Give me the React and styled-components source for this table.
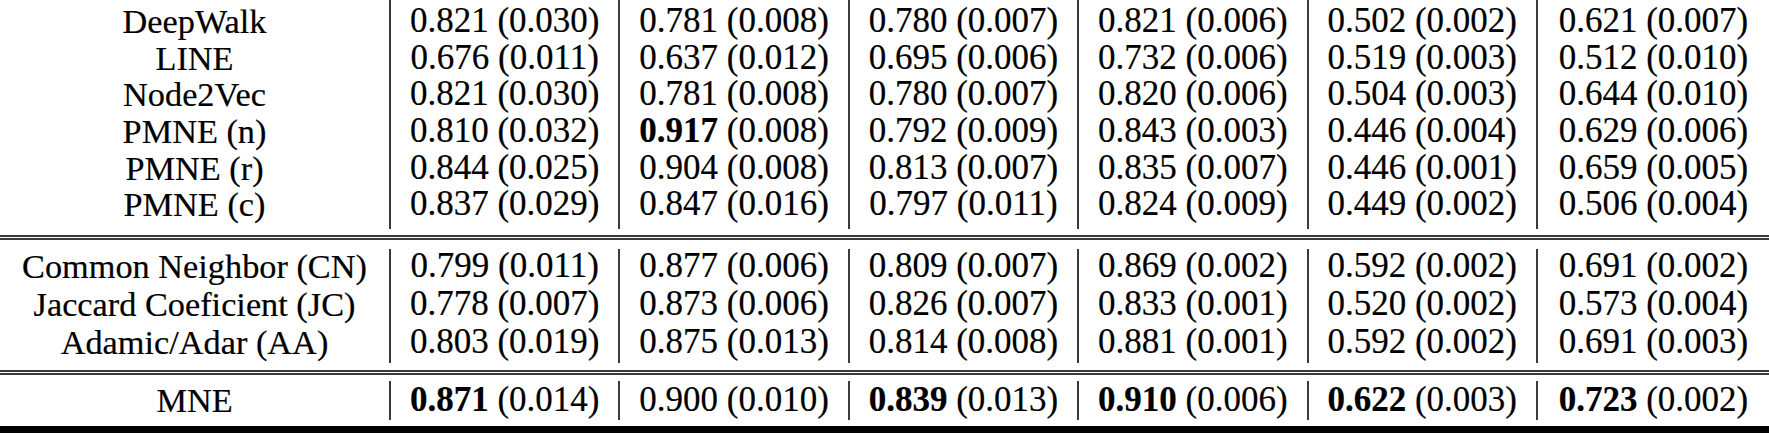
import React from "react";
import styled, { createGlobalStyle } from "styled-components";

const GlobalStyle = createGlobalStyle`
  html, body {
    margin: 0;
    padding: 0;
    background: #fff;
  }
  body {
    font-family: "Liberation Serif", "Times New Roman", serif;
    color: #000;
  }
`;

// each section lists the rows; a leading * marks the best mean in that column
const sections = [
  {
    lead: 9,
    shift: 0,
    rowHeight: 36.7,
    rows: [
      ["DeepWalk", "0.821 (0.030)", "0.781 (0.008)", "0.780 (0.007)", "0.821 (0.006)", "0.502 (0.002)", "0.621 (0.007)"],
      ["LINE", "0.676 (0.011)", "0.637 (0.012)", "0.695 (0.006)", "0.732 (0.006)", "0.519 (0.003)", "0.512 (0.010)"],
      ["Node2Vec", "0.821 (0.030)", "0.781 (0.008)", "0.780 (0.007)", "0.820 (0.006)", "0.504 (0.003)", "0.644 (0.010)"],
      ["PMNE (n)", "0.810 (0.032)", "*0.917 (0.008)", "0.792 (0.009)", "0.843 (0.003)", "0.446 (0.004)", "0.629 (0.006)"],
      ["PMNE (r)", "0.844 (0.025)", "0.904 (0.008)", "0.813 (0.007)", "0.835 (0.007)", "0.446 (0.001)", "0.659 (0.005)"],
      ["PMNE (c)", "0.837 (0.029)", "0.847 (0.016)", "0.797 (0.011)", "0.824 (0.009)", "0.449 (0.002)", "0.506 (0.004)"],
    ],
  },
  {
    lead: 0,
    shift: 5,
    rowHeight: 38,
    rows: [
      ["Common Neighbor (CN)", "0.799 (0.011)", "0.877 (0.006)", "0.809 (0.007)", "0.869 (0.002)", "0.592 (0.002)", "0.691 (0.002)"],
      ["Jaccard Coeficient (JC)", "0.778 (0.007)", "0.873 (0.006)", "0.826 (0.007)", "0.833 (0.001)", "0.520 (0.002)", "0.573 (0.004)"],
      ["Adamic/Adar (AA)", "0.803 (0.019)", "0.875 (0.013)", "0.814 (0.008)", "0.881 (0.001)", "0.592 (0.002)", "0.691 (0.003)"],
    ],
  },
  {
    lead: 0,
    shift: 6.5,
    rowHeight: 39,
    rows: [
      ["MNE", "*0.871 (0.014)", "0.900 (0.010)", "*0.839 (0.013)", "*0.910 (0.006)", "*0.622 (0.003)", "*0.723 (0.002)"],
    ],
  },
];

function Score({ value }) {
  const bold = value.startsWith("*");
  const [mean, std] = value.replace("*", "").split(" ");
  return (
    <>
      {bold ? <Best>{mean}</Best> : mean} {std}
    </>
  );
}

function App() {
  return (
    <>
      <GlobalStyle />
      <Table>
        {sections.map((section, si) => (
          <React.Fragment key={si}>
            {si > 0 && <DoubleRule $top={si === 1 ? 6 : 7} $bottom={si === 1 ? 9 : 6} />}
            <Section>
              {section.rows[0].map((_, ci) => (
                <Column key={ci} $lead={section.lead} $divider={ci > 0}>
                  {section.rows.map((row, ri) => (
                    <Cell key={ri} $h={section.rowHeight} $shift={section.shift} $label={ci === 0}>
                      {ci === 0 ? row[0] : <Score value={row[ci]} />}
                    </Cell>
                  ))}
                </Column>
              ))}
            </Section>
          </React.Fragment>
        ))}
        <BottomRule />
      </Table>
    </>
  );
}

const Table = styled.div`
  width: 1769px;
  display: flex;
  flex-direction: column;
`;

const Section = styled.div`
  display: grid;
  grid-template-columns: 389px repeat(5, 229.4px) 1fr;
`;

const Column = styled.div`
  display: flex;
  flex-direction: column;
  align-items: center;
  padding-top: ${(p) => p.$lead}px;
  border-left: ${(p) => (p.$divider ? "2px solid #3c3c3c" : "none")};
`;

const Cell = styled.div`
  box-sizing: border-box;
  height: ${(p) => p.$h}px;
  padding-top: ${(p) => p.$shift}px;
  font-size: ${(p) => (p.$label ? "34.3px" : "35px")};
  line-height: 24.5px;
  white-space: nowrap;
  text-align: center;
  -webkit-text-stroke: 0.2px #000;
`;

const Best = styled.b`
  font-weight: 700;
`;

const DoubleRule = styled.div`
  height: 1px;
  margin: ${(p) => p.$top}px 0 ${(p) => p.$bottom}px;
  border-top: 2px solid #3a3a3a;
  border-bottom: 2px solid #3a3a3a;
`;

const BottomRule = styled.div`
  height: 7px;
  margin-top: 6px;
  background: #000;
`;

export default App;
